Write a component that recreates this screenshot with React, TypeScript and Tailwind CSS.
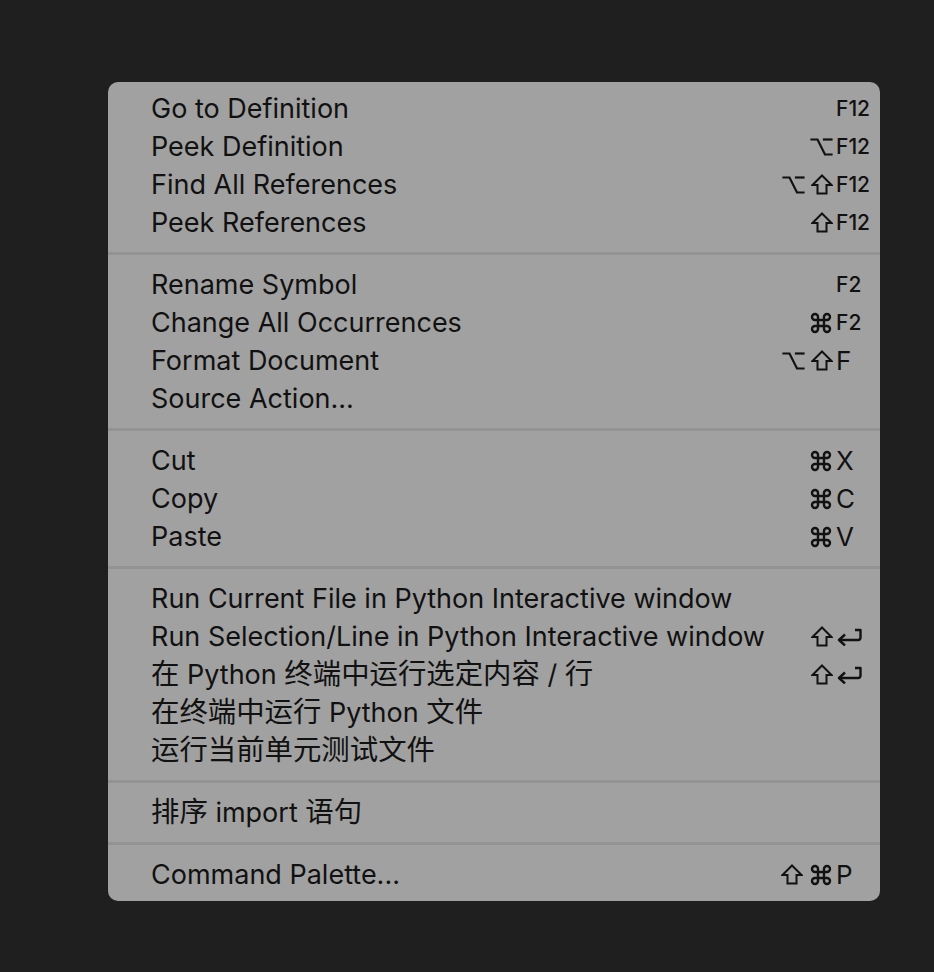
import React from 'react';

type Mod = 'opt' | 'shift' | 'cmd';

type Item = {
  label: string;
  mods?: Mod[];
  key?: string;
  fkey?: boolean;
  ret?: boolean;
};

const groups: Item[][] = [
  [
    { label: 'Go to Definition', key: 'F12', fkey: true },
    { label: 'Peek Definition', mods: ['opt'], key: 'F12', fkey: true },
    { label: 'Find All References', mods: ['opt', 'shift'], key: 'F12', fkey: true },
    { label: 'Peek References', mods: ['shift'], key: 'F12', fkey: true },
  ],
  [
    { label: 'Rename Symbol', key: 'F2', fkey: true },
    { label: 'Change All Occurrences', mods: ['cmd'], key: 'F2', fkey: true },
    { label: 'Format Document', mods: ['opt', 'shift'], key: 'F' },
    { label: 'Source Action...' },
  ],
  [
    { label: 'Cut', mods: ['cmd'], key: 'X' },
    { label: 'Copy', mods: ['cmd'], key: 'C' },
    { label: 'Paste', mods: ['cmd'], key: 'V' },
  ],
  [
    { label: 'Run Current File in Python Interactive window' },
    { label: 'Run Selection/Line in Python Interactive window', mods: ['shift'], ret: true },
    { label: '在 Python 终端中运行选定内容 / 行', mods: ['shift'], ret: true },
    { label: '在终端中运行 Python 文件' },
    { label: '运行当前单元测试文件' },
  ],
  [{ label: '排序 import 语句' }],
  [{ label: 'Command Palette...', mods: ['shift', 'cmd'], key: 'P' }],
];

const ModIcon = ({ mod }: { mod: Mod }) => {
  if (mod === 'opt') {
    return (
      <svg width="23" height="20" viewBox="0 0 23 20" fill="none" stroke="#111" strokeWidth="2.2" strokeLinecap="square">
        <path d="M1.5 2.5H7.5L15 17.5H21.5" />
        <path d="M14 2.5H21.5" />
      </svg>
    );
  }
  if (mod === 'shift') {
    return (
      <svg width="22" height="21" viewBox="0 0 22 21" fill="none" stroke="#111" strokeWidth="2" strokeLinejoin="miter">
        <path d="M11 1.5L20.5 11H15.5V19.5H6.5V11H1.5Z" />
      </svg>
    );
  }
  return (
    <svg width="24" height="22" viewBox="0 0 24 22" fill="none" stroke="#111" strokeWidth="2.4">
      <path d="M15 5v12a3 3 0 1 0 3-3H6a3 3 0 1 0 3 3V5a3 3 0 1 0-3 3h12a3 3 0 1 0-3-3" />
    </svg>
  );
};

const ReturnIcon = () => (
  <svg width="27" height="18" viewBox="0 0 27 18" fill="none" stroke="#111" strokeWidth="2.4" strokeLinejoin="round">
    <path d="M19 2H24.5V9.5Q24.5 12 22 12H3.5" />
    <path d="M9 6.5L3 12L9 17.5" />
  </svg>
);

// CJK runs are set a little larger, as the reference's system font draws them
const Label = ({ text }: { text: string }) => {
  const parts = text.split(/([\u3000-\u9fff]+)/).filter(Boolean);
  return (
    <span className="text-[27px] leading-none whitespace-nowrap">
      {parts.map((p, i) =>
        /[\u3000-\u9fff]/.test(p) ? (
          <span key={i} className="text-[28.4px]">{p}</span>
        ) : (
          <span key={i}>{p}</span>
        )
      )}
    </span>
  );
};

const Shortcut = ({ item }: { item: Item }) => {
  if (!item.mods && !item.key && !item.ret) return null;
  return (
    <div className="flex items-center">
      <div className="flex items-center justify-end gap-[6px]">
        {(item.mods || []).map((m, i) => (
          <ModIcon key={i} mod={m} />
        ))}
      </div>
      <div className="ml-[3px] w-[36px] flex items-center">
        {item.ret ? (
          <ReturnIcon />
        ) : item.fkey ? (
          <span className="text-[21px] font-medium leading-none">{item.key}</span>
        ) : (
          <span className="text-[26px] leading-none">{item.key}</span>
        )}
      </div>
    </div>
  );
};

const App = () => {
  return (
    <div
      className="min-h-screen bg-[#1f1f1f] pt-[82px] pl-[108px] text-[#111]"
      style={{ fontFamily: 'Inter, "Noto Sans CJK SC", sans-serif' }}
    >
      <div className="w-[772px] rounded-[10px] bg-[#a1a1a1] pt-[7px] pb-[8px]">
        {groups.map((group, gi) => (
          <div key={gi}>
            {gi > 0 && (
              <div className="h-[24px] flex items-center">
                <div className="h-[3px] w-full bg-[#939393]" />
              </div>
            )}
            {group.map((item, ii) => (
              <div key={ii} className="h-[38px] flex items-center justify-between pl-[43px] pr-[8px] pt-[1px]">
                <Label text={item.label} />
                <Shortcut item={item} />
              </div>
            ))}
          </div>
        ))}
      </div>
    </div>
  );
};

export default App;
